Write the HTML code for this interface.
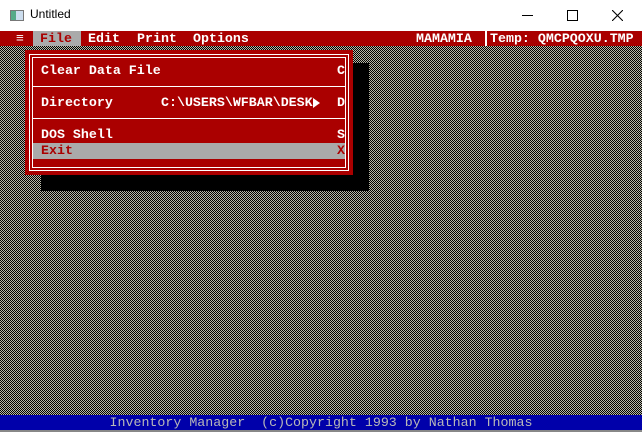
<!DOCTYPE html>
<html><head><style>
*{margin:0;padding:0;box-sizing:border-box}
body{width:642px;height:432px;overflow:hidden;background:#fff;position:relative;font-family:"Liberation Mono",monospace}
.t{position:absolute;white-space:pre;font-family:"Liberation Mono",monospace;font-weight:bold;font-size:13.3px;line-height:16px}
#bg{position:absolute;left:0;top:46px;width:642px;height:369px;background-color:#000;background-image:repeating-conic-gradient(#b8b8a8 0 25%,#000 0 50%);background-size:2px 2px}
</style></head><body>
<div style="position:absolute;left:0;top:0;width:642px;height:31px;background:#fff"></div>
<div style="position:absolute;left:10px;top:10px;width:14px;height:11px;border:1px solid #777;background:linear-gradient(90deg,#5a8 0 40%,#cde 40%)"></div>
<div style="position:absolute;left:30px;top:7px;font-family:'Liberation Sans',sans-serif;font-size:12px">Untitled</div>
<div style="position:absolute;left:522px;top:15px;width:11px;height:1px;background:#000"></div>
<div style="position:absolute;left:567px;top:10px;width:11px;height:11px;border:1px solid #000"></div>
<svg style="position:absolute;left:612px;top:10px" width="11" height="11"><path d="M0 0L11 11M11 0L0 11" stroke="#000" stroke-width="1.1"/></svg>
<div style="position:absolute;left:0;top:31px;width:642px;height:15px;background:#aa0000"></div>
<div style="position:absolute;left:33px;top:31px;width:48px;height:15px;background:#aaaaaa"></div>
<div class="t" style="left:16px;top:31px;color:#fff">≡</div>
<div class="t" style="left:40px;top:31px;color:#aa0000">File</div>
<div class="t" style="left:88px;top:31px;color:#fff">Edit</div>
<div class="t" style="left:137px;top:31px;color:#fff">Print</div>
<div class="t" style="left:193px;top:31px;color:#fff">Options</div>
<div class="t" style="left:416px;top:31px;color:#fff">MAMAMIA</div>
<div style="position:absolute;left:485px;top:31px;width:2px;height:15px;background:#fff"></div>
<div class="t" style="left:490px;top:31px;color:#fff">Temp: QMCPQOXU.TMP</div>
<div id="bg"></div>
<div style="position:absolute;left:41px;top:63px;width:328px;height:128px;background:#000"></div>
<div style="position:absolute;left:25px;top:50px;width:328px;height:125px;background:#aa0000"></div>
<div style="position:absolute;left:29px;top:54px;width:320px;height:117px;border:1px solid #fff"></div>
<div style="position:absolute;left:32px;top:57px;width:314px;height:111px;border:1px solid #fff"></div>
<div style="position:absolute;left:33px;top:86px;width:312px;height:1px;background:#fff"></div>
<div style="position:absolute;left:33px;top:118px;width:312px;height:1px;background:#fff"></div>
<div style="position:absolute;left:33px;top:143px;width:312px;height:16px;background:#aaaaaa"></div>
<div class="t" style="left:41px;top:63px;color:#fff">Clear Data File</div>
<div class="t" style="left:337px;top:63px;color:#fff">C</div>
<div class="t" style="left:41px;top:95px;color:#fff">Directory</div>
<div class="t" style="left:161px;top:95px;color:#fff">C:\USERS\WFBAR\DESK</div>
<svg style="position:absolute;left:313px;top:98px" width="7" height="10"><path d="M0 0L7 5L0 10Z" fill="#fff"/></svg>
<div class="t" style="left:337px;top:95px;color:#fff">D</div>
<div class="t" style="left:41px;top:127px;color:#fff">DOS Shell</div>
<div class="t" style="left:337px;top:127px;color:#fff">S</div>
<div class="t" style="left:41px;top:143px;color:#aa0000">Exit</div>
<div class="t" style="left:337px;top:143px;color:#aa0000">X</div>
<div style="position:absolute;left:0;top:415px;width:642px;height:15px;background:#0000aa"></div>
<div class="t" style="left:0;top:415px;width:642px;text-align:center;color:#b8b8b8;font-weight:normal">Inventory Manager  (c)Copyright 1993 by Nathan Thomas</div>
<div style="position:absolute;left:0;top:430px;width:642px;height:2px;background:#888"></div>
</body></html>
